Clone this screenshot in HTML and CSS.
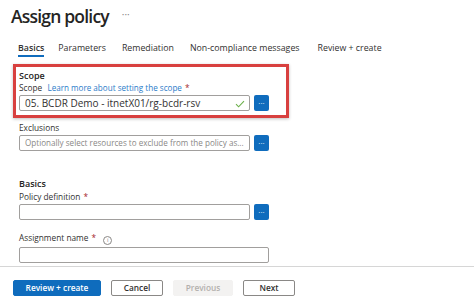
FILE: index.html
```html
<!DOCTYPE html>
<html>
<head>
<meta charset="utf-8">
<link rel="stylesheet" href="styles.css">
</head>
<body>
<div class="page">
  <header class="header">
    <h1 class="title">Assign policy</h1>
    <span class="more">···</span>
  </header>
  <nav class="tabs">
    <span class="tab active">Basics</span>
    <span class="tab">Parameters</span>
    <span class="tab">Remediation</span>
    <span class="tab">Non-compliance messages</span>
    <span class="tab">Review + create</span>
  </nav>
  <main class="form">
    <section class="highlight">
      <div class="section-title">Scope</div>
      <div class="label">Scope <a class="link">Learn more about setting the scope</a> <span class="req">*</span></div>
      <div class="row">
        <div class="input filled">05. BCDR Demo - itnetX01/rg-bcdr-rsv
          <svg class="check" width="10" height="8" viewBox="0 0 10 8"><path d="M1 4.2 L3.6 6.8 L9 1.2" fill="none" stroke="#6bb04a" stroke-width="1.1"/></svg>
        </div>
        <button class="dots">···</button>
      </div>
    </section>
    <div class="field excl">
      <div class="label">Exclusions</div>
      <div class="row">
        <div class="input placeholder">Optionally select resources to exclude from the policy as...</div>
        <button class="dots">···</button>
      </div>
    </div>
    <div class="section-title basics">Basics</div>
    <div class="field">
      <div class="label">Policy definition <span class="req">*</span></div>
      <div class="row">
        <div class="input"></div>
        <button class="dots">···</button>
      </div>
    </div>
    <div class="field assign">
      <div class="label">Assignment name <span class="req">*</span> <span class="info">i</span></div>
      <div class="input wide"></div>
    </div>
  </main>
  <footer class="footer">
    <button class="btn primary">Review + create</button>
    <button class="btn">Cancel</button>
    <button class="btn disabled">Previous</button>
    <button class="btn">Next</button>
  </footer>
</div>
</body>
</html>
```
FILE: styles.css
```css
* { box-sizing: border-box; }
html, body { margin: 0; padding: 0; background: #fff; }
body {
  font-family: "Open Sans", "Noto Sans", sans-serif;
  color: #323130;
  width: 474px;
  height: 303px;
  overflow: hidden;
}
.page { display: flex; flex-direction: column; }
.header {
  display: flex;
  align-items: center;
  height: 30px;
  padding: 2px 0 0 11px;
}
.title {
  margin: 0;
  font-size: 17.5px;
  font-weight: 600;
  letter-spacing: -0.8px;
  color: #252423;
}
.more {
  margin-left: 13px;
  font-size: 10px;
  color: #8a8886;
  margin-top: -4px;
}
.tabs {
  display: flex;
  gap: 14px;
  padding: 11px 0 0 18px;
  height: 29px;
  font-size: 8.8px;
  color: #323130;
}
.tab { height: 16px; line-height: 14px; }
.tab.active {
  border-bottom: 2px solid #0f6cbd;
  font-weight: 600;
}
.tabs .tab:nth-child(3) { margin-left: 2px; }
.tabs .tab:nth-child(4) { margin-left: 2px; }
.tabs .tab:nth-child(5) { margin-left: 4px; }
.form {
  display: flex;
  flex-direction: column;
  padding-left: 13px;
  height: 207px;
}
.highlight {
  margin-top: 5px;
  width: 276px;
  height: 54px;
  border: 3px solid #d8403f;
  box-shadow: 0 1px 3px rgba(0,0,0,0.25);
  padding: 2px 0 0 3px;
}
.section-title {
  font-size: 9px;
  font-weight: 600;
  line-height: 13px;
  color: #252423;
}
.label {
  font-size: 8.3px;
  line-height: 12px;
  color: #323130;
}
.link { color: #2b7cc9; font-size: 8.1px; margin-left: 3px; }
.req { color: #a4262c; margin-left: 1px; }
.row {
  display: flex;
  align-items: center;
  gap: 4px;
  margin-top: 1px;
}
.input {
  width: 231px;
  height: 16px;
  border: 1px solid #a19f9d;
  border-radius: 2px;
  font-size: 9.6px;
  line-height: 14px;
  padding: 0 5px;
  position: relative;
  white-space: nowrap;
  overflow: hidden;
}
.input.filled { color: #323130; font-size: 10px; }
.input.placeholder { color: #8a8886; font-size: 8.1px; }
.check { position: absolute; right: 4px; top: 4px; }
.dots {
  width: 15px;
  height: 16px;
  border: none;
  border-radius: 2px;
  background: #0f6cbd;
  color: #fff;
  font-size: 8px;
  line-height: 14px;
  padding: 0;
  font-family: inherit;
}
.field { padding-left: 6px; }
.excl { margin-top: 3px; }
.basics { margin-top: 26px; padding-left: 6px; }
.field .label { margin-top: 1px; }
.field .row { margin-top: 1px; }
.assign { margin-top: 11px; }
.assign .input.wide { width: 250px; margin-top: 2px; }
.info {
  display: inline-block;
  width: 9px;
  height: 9px;
  border: 1px solid #8a8886;
  border-radius: 50%;
  font-size: 6px;
  line-height: 7px;
  text-align: center;
  margin-left: 5px;
  vertical-align: -1px;
  color: #8a8886;
}
.footer {
  border-top: 1px solid #d6d6d6;
  display: flex;
  gap: 10px;
  padding: 13px 0 0 13px;
  height: 37px;
}
.btn {
  height: 16px;
  width: 52px;
  border: 1px solid #8a8886;
  border-radius: 2px;
  background: #fff;
  font-family: inherit;
  font-size: 8.3px;
  font-weight: 600;
  color: #323130;
  padding: 0;
  line-height: 14px;
}
.btn.primary {
  width: 88px;
  background: #0f6cbd;
  border-color: #0f6cbd;
  color: #fff;
}
.btn.disabled {
  width: 60px;
  background: #f3f2f1;
  border-color: #f3f2f1;
  color: #b3b0ad;
}
```
